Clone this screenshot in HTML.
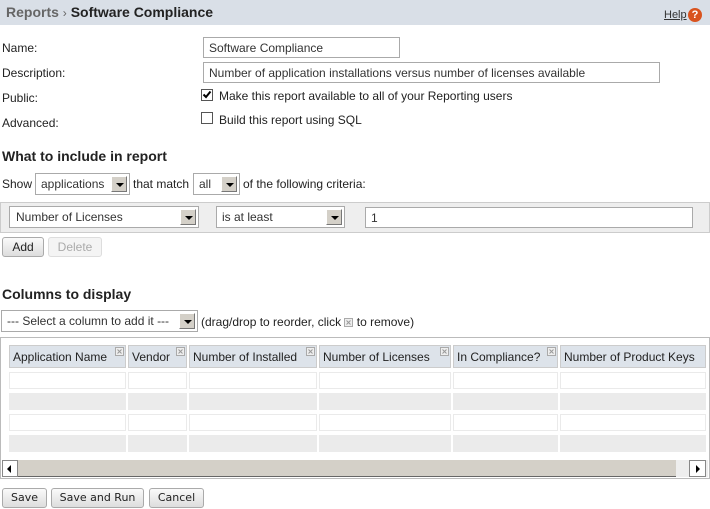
<!DOCTYPE html>
<html><head><style>
*{box-sizing:border-box;margin:0;padding:0}
body{width:710px;height:509px;position:relative;font-family:"Liberation Sans",Arial,sans-serif;font-size:12px;color:#222;background:#fff;overflow:hidden}
.a{position:absolute}
.hdr{left:0;top:0;width:710px;height:25px;background:#d9dfe7}
.lbl{left:2px;font-size:12px}
.inp{border:1px solid #aaa;background:#fff;height:21px;padding:3px 5px;color:#333;font-size:12px;white-space:nowrap}
.cb{width:12px;height:12px;border:1px solid #555;background:#fff}
.sel{border:1px solid #aaa;background:#fff;height:22px;padding:3px 5px;color:#333;white-space:nowrap}
.arr{position:absolute;right:2px;top:2px;width:16px;height:16px;background:#d4d0c8;border:1px solid #777;border-top-color:#fff;border-left-color:#fff}
.arr:after{content:"";position:absolute;left:4px;top:6px;border-left:4px solid transparent;border-right:4px solid transparent;border-top:4px solid #000}
.h2{font-weight:bold;font-size:14px;left:2px}
.btn{border:1px solid #aaa;border-radius:3px;background:linear-gradient(#fafafa,#ddd);height:20px;text-align:center;line-height:18px;font-size:12px}
.th{top:345px;height:23px;background:#dde3ea;border:1px solid #ccc;padding:4px 3px;font-size:12px;white-space:nowrap;overflow:hidden}
.x{position:absolute;right:1px;top:1px;width:9px;height:9px}
.c{height:17px;border:1px solid #eaeaea}
.w{background:#fff}.g{background:#ebebeb;border-color:#ebebeb}
</style></head><body>
<svg width="0" height="0" style="position:absolute"><defs><symbol id="xx" viewBox="0 0 9 9"><rect x="0.5" y="0.5" width="8" height="8" fill="#eee" stroke="#aaa"/><path d="M2.5 2.5L6.5 6.5M6.5 2.5L2.5 6.5" stroke="#999" stroke-width="1"/></symbol></defs></svg>
<div class="a hdr"></div>
<div class="a" style="left:6px;top:4px;font-size:14px;font-weight:bold;color:#666">Reports <span style="font-weight:normal;font-size:12px">›</span> <span style="color:#222">Software Compliance</span></div>
<div class="a" style="left:664px;top:9px;font-size:11px;color:#333;text-decoration:underline">Help</div>
<div class="a" style="left:688px;top:8px;width:14px;height:14px;border-radius:50%;background:#d9531e;color:#fff;font-size:11px;font-weight:bold;text-align:center;line-height:14px">?</div>

<div class="a lbl" style="top:41px">Name:</div>
<div class="a lbl" style="top:66px">Description:</div>
<div class="a lbl" style="top:91px">Public:</div>
<div class="a lbl" style="top:116px">Advanced:</div>
<div class="a inp" style="left:203px;top:37px;width:197px">Software Compliance</div>
<div class="a inp" style="left:203px;top:62px;width:457px">Number of application installations versus number of licenses available</div>
<div class="a cb" style="left:201px;top:89px"></div>
<svg class="a" style="left:201px;top:89px" width="12" height="12"><path d="M2.5 5.5L5 8L9.5 2.5" stroke="#000" stroke-width="2" fill="none"/></svg>
<div class="a" style="left:219px;top:89px">Make this report available to all of your Reporting users</div>
<div class="a cb" style="left:201px;top:112px"></div>
<div class="a" style="left:219px;top:113px">Build this report using SQL</div>

<div class="a h2" style="top:148px">What to include in report</div>
<div class="a" style="left:2px;top:177px">Show</div>
<div class="a sel" style="left:35px;top:173px;width:95px">applications<span class="arr"></span></div>
<div class="a" style="left:133px;top:177px">that match</div>
<div class="a sel" style="left:193px;top:173px;width:47px">all<span class="arr"></span></div>
<div class="a" style="left:243px;top:177px">of the following criteria:</div>

<div class="a" style="left:0;top:202px;width:710px;height:31px;background:#eee;border:1px solid #ccc"></div>
<div class="a sel" style="left:9px;top:206px;width:190px;padding-left:6px">Number of Licenses<span class="arr"></span></div>
<div class="a sel" style="left:216px;top:206px;width:129px">is at least<span class="arr"></span></div>
<div class="a inp" style="left:365px;top:207px;width:328px">1</div>
<div class="a btn" style="left:2px;top:237px;width:42px">Add</div>
<div class="a btn" style="left:48px;top:237px;width:54px;color:#aaa;border-color:#ddd;background:#f4f4f4">Delete</div>

<div class="a h2" style="top:286px">Columns to display</div>
<div class="a sel" style="left:1px;top:310px;width:197px">--- Select a column to add it ---<span class="arr"></span></div>
<div class="a" style="left:201px;top:315px">(drag/drop to reorder, click <svg width="9" height="9" style="vertical-align:-1px"><use href="#xx"/></svg> to remove)</div>

<div class="a" style="left:0;top:337px;width:710px;height:142px;border:1px solid #bbb"></div>
<div class="a th" style="left:9px;width:117px">Application Name<svg class="x"><use href="#xx"/></svg></div>
<div class="a th" style="left:128px;width:59px">Vendor<svg class="x"><use href="#xx"/></svg></div>
<div class="a th" style="left:189px;width:128px">Number of Installed<svg class="x"><use href="#xx"/></svg></div>
<div class="a th" style="left:319px;width:132px">Number of Licenses<svg class="x"><use href="#xx"/></svg></div>
<div class="a th" style="left:453px;width:105px">In Compliance?<svg class="x"><use href="#xx"/></svg></div>
<div class="a th" style="left:560px;width:146px">Number of Product Keys</div>

<div id="rows"></div>
<script>
var xs=[[9,117],[128,59],[189,128],[319,132],[453,105],[560,146]],ys=[[372,'w'],[393,'g'],[414,'w'],[435,'g']],h='';
ys.forEach(function(y){xs.forEach(function(x){h+='<div class="a c '+y[1]+'" style="left:'+x[0]+'px;top:'+y[0]+'px;width:'+x[1]+'px"></div>'})});
document.getElementById('rows').innerHTML=h;
</script>

<div class="a" style="left:2px;top:460px;width:706px;height:17px;background:#d4d0c8;border-bottom:1px solid #666"></div>
<div class="a" style="left:2px;top:460px;width:16px;height:17px;background:#fff;border:1px solid #888"></div>
<div class="a" style="left:7px;top:465px;border-top:4px solid transparent;border-bottom:4px solid transparent;border-right:4px solid #000"></div>
<div class="a" style="left:676px;top:460px;width:32px;height:17px;background:#eee"></div>
<div class="a" style="left:689px;top:460px;width:17px;height:17px;background:#fff;border:1px solid #888"></div>
<div class="a" style="left:696px;top:465px;border-top:4px solid transparent;border-bottom:4px solid transparent;border-left:4px solid #000"></div>

<div class="a btn" style="left:2px;top:488px;width:45px;font-family:'DejaVu Sans',sans-serif;font-size:11px">Save</div>
<div class="a btn" style="left:51px;top:488px;width:93px;font-family:'DejaVu Sans',sans-serif;font-size:11px">Save and Run</div>
<div class="a btn" style="left:149px;top:488px;width:55px;font-family:'DejaVu Sans',sans-serif;font-size:11px">Cancel</div>
</body></html>
